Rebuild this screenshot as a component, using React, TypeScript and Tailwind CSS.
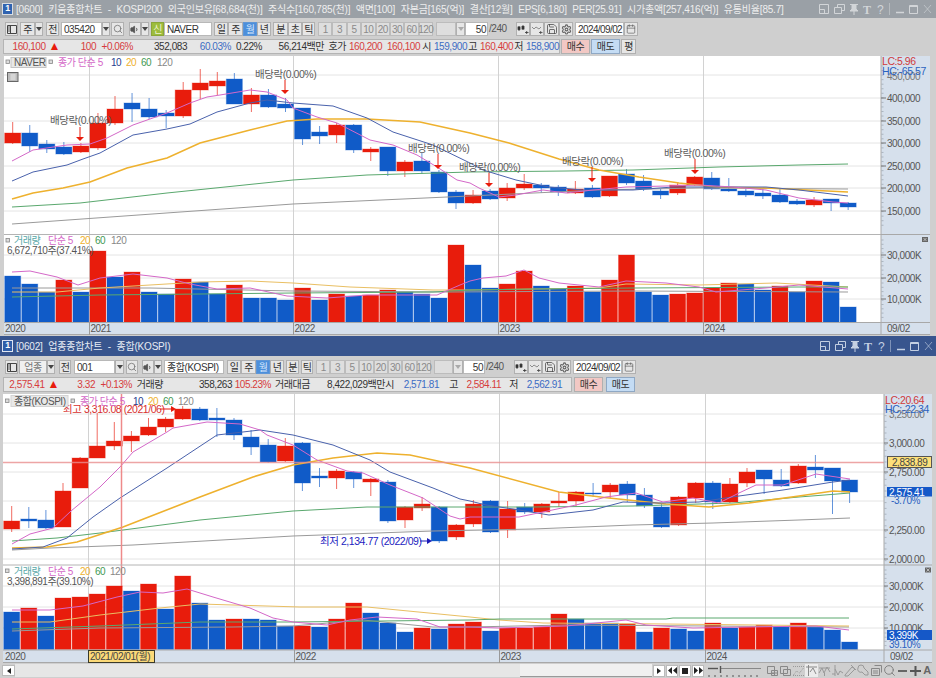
import React from 'react';
import { Search, Volume1, Save, Settings, Calendar } from 'lucide-react';

type Candle = [number, number, number, number, 'r' | 'b'];
type Bar = [number, 'r' | 'b'];

const RED = '#e81c0c';
const BLUE = '#105bc8';
const MA5 = '#d468c8';
const MA10 = '#4a62ac';
const MA20 = '#eeb12e';
const MA60 = '#5aa86e';
const MA120 = '#9a9a9a';

// 상단 차트 (NAVER) 봉 좌표: 몸통 위, 몸통 아래, 꼬리 위, 꼬리 아래
const TOP_CANDLES: Candle[] = [
  [133, 143, 122, 144, 'r'], [133, 146, 125, 152, 'b'], [144, 149, 140, 153, 'b'], [147, 154, 142, 155, 'b'], [146, 152, 143, 153, 'r'],
  [123, 148, 113, 150, 'r'], [109, 123, 96, 125, 'r'], [103, 109, 93, 122, 'b'], [109, 117, 98, 119, 'b'], [113, 116, 110, 128, 'b'],
  [90, 116, 82, 118, 'r'], [83, 90, 69, 99, 'r'], [81, 86, 72, 95, 'r'], [79, 104, 73, 104, 'b'], [95, 104, 88, 112, 'r'],
  [95, 107, 89, 108, 'b'], [104, 108, 98, 112, 'b'], [108, 139, 108, 145, 'b'], [132, 136, 126, 144, 'b'], [125, 135, 123, 143, 'r'],
  [125, 150, 124, 153, 'b'], [149, 152, 147, 161, 'r'], [147, 171, 147, 176, 'b'], [162, 171, 160, 177, 'r'], [161, 171, 153, 174, 'b'],
  [172, 192, 170, 193, 'b'], [192, 203, 190, 209, 'b'], [195, 203, 190, 204, 'r'], [191, 199, 189, 200, 'b'], [188, 198, 183, 201, 'r'],
  [184, 188, 174, 190, 'r'], [185, 188, 183, 193, 'b'], [187, 192, 185, 196, 'b'], [189, 193, 181, 194, 'r'], [188, 197, 185, 198, 'b'],
  [176, 196, 176, 197, 'r'], [174, 183, 169, 185, 'b'], [181, 189, 175, 191, 'b'], [191, 195, 189, 199, 'b'], [185, 193, 183, 195, 'r'],
  [177, 185, 176, 186, 'r'], [178, 189, 172, 190, 'b'], [189, 191, 178, 192, 'b'], [191, 195, 188, 197, 'b'], [193, 196, 189, 199, 'b'],
  [195, 202, 188, 203, 'b'], [201, 204, 199, 205, 'b'], [200, 205, 197, 207, 'r'], [199, 203, 199, 211, 'b'], [203, 207, 202, 210, 'b'],
];

const TOP_VOLUME: Bar[] = [
  [276, 'b'], [284, 'b'], [292, 'b'], [280, 'r'], [292, 'b'], [251, 'r'], [277, 'b'], [272, 'r'], [292, 'b'], [294, 'b'],
  [279, 'r'], [282, 'b'], [294, 'b'], [285, 'r'], [298, 'b'], [298, 'b'], [300, 'b'], [288, 'r'], [300, 'b'], [294, 'r'],
  [296, 'b'], [295, 'r'], [290, 'r'], [292, 'b'], [294, 'b'], [298, 'b'], [245, 'r'], [265, 'b'], [288, 'b'], [284, 'r'],
  [271, 'r'], [286, 'b'], [289, 'b'], [286, 'r'], [292, 'b'], [280, 'r'], [255, 'r'], [292, 'b'], [295, 'b'], [294, 'r'],
  [293, 'r'], [288, 'r'], [283, 'r'], [284, 'b'], [290, 'b'], [286, 'r'], [292, 'b'], [281, 'r'], [282, 'b'], [307, 'b'],
];

// 하단 차트 (KOSPI)
const BOTTOM_CANDLES: Candle[] = [
  [521, 529, 506, 532, 'r'], [519, 521, 507, 528, 'b'], [520, 528, 510, 529, 'b'], [491, 527, 483, 527, 'r'], [458, 488, 457, 488, 'r'],
  [446, 458, 413, 458, 'r'], [441, 446, 422, 450, 'r'], [436, 441, 431, 452, 'r'], [427, 435, 418, 436, 'r'], [419, 427, 417, 432, 'r'],
  [409, 419, 406, 420, 'r'], [409, 420, 407, 421, 'b'], [418, 420, 408, 437, 'b'], [420, 435, 418, 440, 'b'], [437, 447, 430, 455, 'b'],
  [445, 462, 439, 463, 'b'], [446, 461, 438, 462, 'r'], [443, 483, 442, 491, 'b'], [476, 478, 468, 487, 'b'], [471, 478, 469, 489, 'r'],
  [472, 479, 471, 488, 'b'], [479, 482, 478, 496, 'r'], [482, 521, 480, 523, 'b'], [507, 520, 506, 528, 'r'], [504, 508, 497, 511, 'r'],
  [507, 541, 506, 543, 'b'], [525, 537, 524, 540, 'r'], [504, 524, 500, 527, 'r'], [501, 532, 500, 533, 'b'], [509, 530, 501, 538, 'r'],
  [507, 512, 503, 514, 'b'], [504, 512, 503, 518, 'r'], [501, 503, 492, 507, 'r'], [492, 501, 491, 506, 'r'], [493, 494, 483, 497, 'b'],
  [485, 492, 483, 498, 'r'], [484, 495, 481, 502, 'b'], [495, 506, 488, 508, 'b'], [507, 527, 503, 528, 'b'], [497, 525, 496, 526, 'r'],
  [483, 498, 482, 503, 'r'], [483, 502, 481, 509, 'b'], [484, 502, 478, 503, 'r'], [472, 483, 468, 487, 'r'], [470, 479, 470, 494, 'b'],
  [480, 486, 469, 487, 'b'], [466, 483, 464, 484, 'r'], [467, 470, 455, 478, 'b'], [468, 481, 468, 514, 'b'], [480, 492, 480, 503, 'b'],
];

const BOTTOM_VOLUME: Bar[] = [
  [612, 'b'], [608, 'r'], [616, 'b'], [598, 'r'], [597, 'r'], [594, 'r'], [586, 'r'], [591, 'b'], [584, 'r'], [609, 'b'],
  [576, 'r'], [603, 'b'], [620, 'b'], [619, 'r'], [619, 'b'], [620, 'b'], [626, 'b'], [626, 'r'], [627, 'b'], [619, 'r'],
  [603, 'r'], [613, 'b'], [623, 'b'], [632, 'b'], [628, 'r'], [629, 'b'], [624, 'r'], [622, 'r'], [631, 'b'], [628, 'r'],
  [628, 'r'], [627, 'r'], [614, 'r'], [619, 'b'], [623, 'b'], [623, 'b'], [624, 'r'], [632, 'b'], [628, 'r'], [629, 'b'],
  [631, 'b'], [623, 'r'], [628, 'b'], [627, 'r'], [625, 'r'], [627, 'b'], [623, 'r'], [627, 'b'], [630, 'b'], [642, 'b'],
];

const TOP_LINES = [
  { c: MA120, w: 1, p: '12,224 293,204 447,197 599,190 699,188 848,189' },
  { c: MA60, w: 1, p: '12,207 80,203 167,193 293,180 367,175 470,172 566,171 633,170 719,167 799,165 848,164' },
  { c: MA20, w: 1.6, p: '12,199 33,193 63,188 90,182 127,168 167,158 200,143 250,130 287,121 317,119 367,119 420,122 470,133 509,143 559,159 599,170 639,177 679,183 716,187 766,188 848,192' },
  { c: MA10, w: 1, p: '12,181 33,172 67,165 83,159 100,153 133,135 167,129 190,124 217,112 250,103 267,100 293,103 333,106 367,118 393,132 433,145 470,163 483,170 516,180 549,187 583,190 633,190 673,187 716,187 766,187 799,190 848,196' },
  { c: MA5, w: 1, p: '12,161 33,150 67,145 90,144 107,138 133,125 167,113 190,103 207,97 220,95 250,90 267,92 287,100 293,108 317,117 337,123 370,140 393,145 417,155 437,167 457,180 470,183 479,188 499,197 516,195 543,190 566,193 593,190 626,187 666,186 699,185 733,187 766,190 799,198 833,202 848,203' },
];

const TOP_VOL_LINES = [
  { c: MA120, w: 1, p: '12,288 83,288 150,288 293,291 447,292 633,291 848,292' },
  { c: '#e9bf63', w: 1, p: '12,292 57,292 100,288 150,285 200,282 250,281 293,283 350,287 433,290 470,290 599,288 626,284 699,285 776,283 848,287' },
  { c: MA60, w: 1, p: '12,297 100,295 200,294 293,293 433,292 470,290 533,289 633,288 799,287 848,287' },
  { c: MA5, w: 1, p: '12,272 30,271 57,277 78,285 100,278 133,274 167,278 190,284 217,289 250,288 287,296 327,298 367,295 437,295 460,285 470,281 483,278 506,276 524,270 539,278 559,283 599,287 626,281 666,283 699,287 716,292 766,288 799,285 848,289' },
];

const BOTTOM_LINES = [
  { c: MA120, w: 1, p: '12,550 50,548 133,545 293,536 433,531 533,529 633,525 713,523 799,520 850,518' },
  { c: MA60, w: 1, p: '12,541 57,538 100,533 200,520 293,511 367,507 470,507 533,507 633,506 733,503 799,497 850,493' },
  { c: MA20, w: 1.6, p: '12,548 47,547 77,542 123,527 200,497 253,477 293,465 333,458 377,453 410,455 470,468 559,492 609,498 666,504 709,507 749,503 799,496 833,491 850,492' },
  { c: MA10, w: 1, p: '12,549 43,547 67,538 93,517 120,498 167,468 217,435 260,430 293,435 333,445 370,460 390,472 433,488 460,499 470,501 486,505 513,509 549,515 593,510 623,502 659,503 699,502 739,496 783,490 833,482 850,480' },
  { c: MA5, w: 1, p: '12,544 30,534 53,528 71,511 100,487 120,467 133,452 167,432 173,428 207,422 240,424 260,430 267,435 293,445 317,460 347,471 363,473 390,485 423,498 450,516 460,519 470,517 519,517 543,512 576,505 606,497 636,493 663,502 693,498 719,503 739,493 756,485 783,485 816,474 850,479' },
];

const BOTTOM_VOL_LINES = [
  { c: MA120, w: 1, p: '12,631 100,628 233,627 293,626 363,620 433,627 470,627 566,625 849,627' },
  { c: '#e9bf63', w: 1, p: '12,622 50,622 100,615 160,608 200,604 300,607 367,607 470,617 499,620 543,623 666,624 849,626' },
  { c: MA60, w: 1, p: '12,629 100,626 200,622 293,622 470,620 499,619 666,619 673,618 849,618' },
  { c: MA5, w: 1, p: '12,610 50,610 83,606 117,597 140,592 163,593 187,589 213,597 250,608 273,618 293,622 327,625 350,620 377,617 417,619 440,627 470,627 499,628 566,626 626,620 646,625 693,628 749,627 816,626 849,630' },
];

function Candles({ data, x0, dx }: { data: Candle[]; x0: number; dx: number }) {
  return (
    <>
      {data.map(([t, b, wt, wb, col], i) => {
        const x = x0 + dx * i;
        const c = col === 'r' ? RED : BLUE;
        return (
          <g key={i}>
            <line x1={x} x2={x} y1={wt} y2={wb} stroke={c} strokeOpacity={0.65} />
            <rect x={x - 8} y={t} width={16} height={Math.max(b - t, 1)} fill={c} stroke={c} strokeOpacity={0.35} />
          </g>
        );
      })}
    </>
  );
}

function Bars({ data, x0, dx, base }: { data: Bar[]; x0: number; dx: number; base: number }) {
  return (
    <>
      {data.map(([t, col], i) => (
        <rect
          key={i}
          x={x0 + dx * i - 8}
          y={t}
          width={16}
          height={base - t}
          fill={col === 'r' ? RED : BLUE}
          stroke={col === 'r' ? RED : BLUE}
          strokeOpacity={0.3}
        />
      ))}
    </>
  );
}

function Lines({ lines }: { lines: { c: string; w: number; p: string }[] }) {
  return (
    <>
      {lines.map((l, i) => (
        <polyline key={i} points={l.p} fill="none" stroke={l.c} strokeWidth={l.w} />
      ))}
    </>
  );
}

function T({ x, y, fill = '#555', size = 10, children }: { x: number; y: number; fill?: string; size?: number; children: React.ReactNode }) {
  return (
    <text x={x} y={y} fill={fill} fontSize={size} letterSpacing={-0.45}>
      {children}
    </text>
  );
}

function Marker({ x, y }: { x: number; y: number }) {
  return <rect x={x} y={y} width={3.5} height={3.5} fill="#ddd" stroke="#888" strokeWidth={0.8} />;
}

function Dividend({ x, y }: { x: number; y: number }) {
  return (
    <T x={x} y={y} size={10.5} fill="#5c5c5c">
      배당락(0.00%)
    </T>
  );
}

function DivArrow({ x, a, b }: { x: number; a: number; b: number }) {
  return (
    <g>
      <line x1={x} x2={x} y1={a} y2={b} stroke="#e81c0c" />
      <polygon points={`${x - 4},${b} ${x + 4},${b} ${x},${b + 4}`} fill="#e81c0c" />
    </g>
  );
}

function AxisTicks({ x, y1, y2, step }: { x: number; y1: number; y2: number; step: number }) {
  const ys: number[] = [];
  for (let y = y1; y < y2; y += step) ys.push(y);
  return (
    <>
      {ys.map((y) => (
        <line key={y} x1={x} x2={x + 2} y1={y} y2={y} stroke="#8f98a3" strokeWidth={0.6} />
      ))}
    </>
  );
}

function CloseBox({ x, y }: { x: number; y: number }) {
  return (
    <g>
      <rect x={x} y={y} width={6} height={5} fill="#666" />
      <path d={`M${x + 1.5} ${y + 1}l3 3m0-3l-3 3`} stroke="#ddd" strokeWidth={0.7} />
    </g>
  );
}

function TopChart() {
  const grid = [75, 98, 121, 143, 166, 188, 211];
  const vgrid = [89.5, 293.5, 498.5, 703.5];
  return (
    <svg viewBox="4 56 926 279" className="block h-[279px] w-[926px] shrink-0">
      <rect x={4} y={56} width={926} height={279} fill="#fff" />
      {grid.map((y) => <line key={y} x1={4} x2={881} y1={y} y2={y} stroke="#e4e4e4" />)}
      {[255, 278, 299].map((y) => <line key={y} x1={4} x2={881} y1={y} y2={y} stroke="#e4e4e4" />)}
      {vgrid.map((x) => <line key={x} x1={x} x2={x} y1={56} y2={322} stroke="#d2d2d2" />)}
      <Candles data={TOP_CANDLES} x0={12.7} dx={17.05} />
      <Lines lines={TOP_LINES} />
      <DivArrow x={80} a={127} b={137} />
      <DivArrow x={285} a={80} b={90} />
      <DivArrow x={438} a={154} b={165} />
      <DivArrow x={489} a={173} b={183} />
      <DivArrow x={592} a={167} b={178} />
      <DivArrow x={695} a={159} b={170} />
      <Dividend x={50} y={124} />
      <Dividend x={255} y={78} />
      <Dividend x={408} y={152} />
      <Dividend x={459} y={171} />
      <Dividend x={562} y={165} />
      <Dividend x={664} y={157} />

      <Bars data={TOP_VOLUME} x0={12.7} dx={17.05} base={322} />
      <Lines lines={TOP_VOL_LINES} />

      <line x1={4} x2={881} y1={234.5} y2={234.5} stroke="#b4b4b4" />
      <rect x={881} y={56} width={49} height={279} fill="#d6e0ec" />
      <line x1={881} x2={881} y1={56} y2={335} stroke="#a8a8a8" />
      <line x1={881} x2={930} y1={234.5} y2={234.5} stroke="#a8a8a8" />
      <AxisTicks x={881.5} y1={66} y2={228} step={4.55} />
      <AxisTicks x={881.5} y1={240} y2={320} step={4.3} />
      {[[98, '400,000'], [121, '350,000'], [143, '300,000'], [166, '250,000'], [188, '200,000'], [211, '150,000'], [255, '30,000K'], [278, '20,000K'], [299, '10,000K']].map(([y, s]) => (
        <g key={s as string}>
          <line x1={881} x2={886} y1={y as number} y2={y as number} stroke="#777" />
          <T x={887} y={(y as number) + 3.5}>{s}</T>
        </g>
      ))}
      <T x={887} y={80} fill="#777">450,000</T>
      <T x={882} y={65} fill="#d03a3a" size={10.5}>LC:5.96</T>
      <T x={882} y={75} fill="#2a62c0" size={10.5}>HC:-65.57</T>
      <CloseBox x={922} y={237} />

      <rect x={4} y={322} width={926} height={13} fill="#d6e0ec" />
      <line x1={4} x2={930} y1={322.5} y2={322.5} stroke="#a8a8a8" />
      <line x1={4} x2={930} y1={334.5} y2={334.5} stroke="#a8a8a8" />
      {[[89.5, '2021'], [293.5, '2022'], [498.5, '2023'], [703.5, '2024']].map(([x, s]) => (
        <g key={s as string}>
          <line x1={x as number} x2={x as number} y1={322} y2={335} stroke="#999" />
          <T x={(x as number) + 1} y={332}>{s}</T>
        </g>
      ))}
      <T x={5} y={332}>2020</T>
      <line x1={881} x2={881} y1={322} y2={335} stroke="#a8a8a8" />
      <T x={887} y={332}>09/02</T>

      <Marker x={6} y={60} />
      <rect x={11} y={57.5} width={35} height={10} fill="#e8e8e8" stroke="#c4c4c4" />
      <T x={14} y={66} fill="#555">NAVER</T>
      <Marker x={49} y={60} />
      <T x={58} y={66} fill={MA5}>종가 단순 5</T>
      <T x={111} y={66} fill="#27408f">10</T>
      <T x={126} y={66} fill={MA20}>20</T>
      <T x={141} y={66} fill="#3f9a55">60</T>
      <T x={157} y={66} fill="#888">120</T>
      <rect x={7.5} y={72.5} width={10.5} height={9} fill="#bbb" stroke="#666" />
      <path d="M10 75h6M10 77h6M10 79h6M12 74v6M14 74v6" stroke="#eee" strokeWidth={0.6} />

      <Marker x={6} y={238.5} />
      <T x={14} y={244} fill="#59a8a8">거래량</T>
      <T x={48} y={244} fill={MA5}>단순 5</T>
      <T x={80} y={244} fill={MA20}>20</T>
      <T x={95} y={244} fill="#3f9a55">60</T>
      <T x={111} y={244} fill="#888">120</T>
      <T x={7} y={254}>6,672,710주(37.41%)</T>
    </svg>
  );
}

function BottomChart() {
  const grid = [414, 443, 472, 501, 530, 559];
  const vgrid = [88.5, 294.5, 499.5, 705.5];
  return (
    <svg viewBox="3 394 929 269" className="block h-[269px] w-[929px] shrink-0">
      <rect x={3} y={394} width={929} height={269} fill="#fff" />
      {grid.map((y) => <line key={y} x1={3} x2={884} y1={y} y2={y} stroke="#e4e4e4" />)}
      {[586, 607, 628].map((y) => <line key={y} x1={3} x2={884} y1={y} y2={y} stroke="#e4e4e4" />)}
      {vgrid.map((x) => <line key={x} x1={x} x2={x} y1={394} y2={650} stroke="#d2d2d2" />)}
      <Candles data={BOTTOM_CANDLES} x0={11.7} dx={17.1} />
      <Lines lines={BOTTOM_LINES} />
      <line x1={3} x2={884} y1={462.5} y2={462.5} stroke="#e88f8f" strokeWidth={1.6} strokeOpacity={0.8} />
      <line x1={121.5} x2={121.5} y1={394} y2={587} stroke="#ee8a8a" strokeWidth={1.5} />

      <T x={63} y={412.5} fill="#d83030" size={10.5}>최고 3,316.08 (2021/06)</T>
      <path d="M160 409h13" stroke="#e81c0c" />
      <polygon points="171,406 176,409 171,412" fill="#e81c0c" />
      <T x={320} y={545} fill="#2222c0" size={10.5}>최저 2,134.77 (2022/09)</T>
      <path d="M420 541h9" stroke="#1a1ab8" />
      <polygon points="427,538 432,541 427,544" fill="#1a1ab8" />

      <Bars data={BOTTOM_VOLUME} x0={11.7} dx={17.1} base={649.5} />
      <Lines lines={BOTTOM_VOL_LINES} />

      <line x1={3} x2={884} y1={565} y2={565} stroke="#b4b4b4" />
      <rect x={884} y={394} width={48} height={269} fill="#d6e0ec" />
      <line x1={884} x2={884} y1={394} y2={663} stroke="#a8a8a8" />
      <line x1={884} x2={932} y1={565} y2={565} stroke="#a8a8a8" />
      <AxisTicks x={884.5} y1={404} y2={562} step={5.8} />
      <AxisTicks x={884.5} y1={570} y2={648} step={4.2} />
      {[[443, '3,000.00'], [472, '2,750.00'], [530, '2,250.00'], [559, '2,000.00'], [586, '30,000K'], [607, '20,000K'], [628, '10,000K']].map(([y, s]) => (
        <g key={s as string}>
          <line x1={884} x2={888} y1={y as number} y2={y as number} stroke="#777" />
          <T x={889} y={(y as number) + 3.5}>{s}</T>
        </g>
      ))}
      <T x={889} y={418} fill="#777">3,250.00</T>
      <T x={885} y={403.5} fill="#d03a3a" size={10.5}>LC:20.64</T>
      <T x={885} y={413} fill="#2a62c0" size={10.5}>HC:-22.34</T>
      <rect x={887.5} y={456.5} width={44} height={11} fill="#fde07a" stroke="#555" />
      <T x={892} y={465.5} fill="#444">2,838.89</T>
      <rect x={887} y={487} width={45} height={9.5} fill="#1558c8" />
      <T x={889} y={495.5} fill="#fff">2,575.41</T>
      <T x={891} y={504} fill="#2a62c0">-3.70%</T>
      <CloseBox x={925} y={567.5} />
      <rect x={887} y={630} width={45} height={10} fill="#1558c8" />
      <T x={889} y={638.5} fill="#fff">3,399K</T>
      <T x={889} y={648} fill="#2a62c0">39.10%</T>

      <rect x={3} y={650} width={929} height={13} fill="#d6e0ec" />
      <line x1={3} x2={932} y1={650} y2={650} stroke="#a8a8a8" />
      <line x1={3} x2={932} y1={662.5} y2={662.5} stroke="#a8a8a8" />
      {[[294.5, '2022'], [499.5, '2023'], [705.5, '2024']].map(([x, s]) => (
        <g key={s as string}>
          <line x1={x as number} x2={x as number} y1={650} y2={663} stroke="#999" />
          <T x={(x as number) + 1} y={660}>{s}</T>
        </g>
      ))}
      <T x={5} y={660}>2020</T>
      <rect x={88.5} y={650.5} width={66} height={12} fill="#fbd978" stroke="#3a3a2a" />
      <T x={90} y={660} fill="#444">2021/02/01(월)</T>
      <line x1={884} x2={884} y1={650} y2={663} stroke="#a8a8a8" />
      <T x={890} y={660}>09/02</T>

      <Marker x={5.5} y={399} />
      <rect x={11} y={395.5} width={57} height={11} fill="#e8e8e8" stroke="#d4d4d4" />
      <T x={14} y={404.5}>종합(KOSPI)</T>
      <Marker x={71} y={399} />
      <T x={80} y={404.5} fill={MA5}>종가 단순 5</T>
      <T x={133} y={404.5} fill="#27408f">10</T>
      <T x={148} y={404.5} fill={MA20}>20</T>
      <T x={163} y={404.5} fill="#3f9a55">60</T>
      <T x={178} y={404.5} fill="#888">120</T>

      <Marker x={5.5} y={569} />
      <T x={14} y={575} fill="#59a8a8">거래량</T>
      <T x={48} y={575} fill={MA5}>단순 5</T>
      <T x={80} y={575} fill={MA20}>20</T>
      <T x={95} y={575} fill="#3f9a55">60</T>
      <T x={110} y={575} fill="#888">120</T>
      <T x={7} y={585}>3,398,891주(39.10%)</T>
    </svg>
  );
}

function WinControls({ color }: { color: string }) {
  return (
    <svg width="116" height="14" viewBox="0 0 116 14" fill="none" stroke={color} strokeWidth="1" className="shrink-0">
      <path d="M2.500 2.500h9v9h-9zM2.500 7.500h5v4" />
      <path d="M17.500 5.500h7v6h-7zM20.500 5.500v-3h7v6h-3" />
      <path d="M33 2.500h8M35 3v4l-2 2h8l-2-2V3M37 9v4" fill={color} />
      <text x="46" y="12" fontSize="12" fontWeight="700" fill={color} stroke="none" fontFamily="Liberation Serif, serif">T</text>
      <text x="60" y="12" fontSize="12" fill={color} stroke="none">?</text>
      <path d="M72.500 1v12" strokeOpacity="0.5" />
      <path d="M79 10.500h8" strokeWidth="1.500" />
      <path d="M92.500 3.500h8v8h-8zM92.500 4.500h8" />
      <path d="M107 3l7 8m0-8l-7 8" strokeOpacity="0.6" />
    </svg>
  );
}

function WinNo({ dark }: { dark?: boolean }) {
  return (
    <span
      className={
        dark
          ? 'flex h-[12px] w-[11px] shrink-0 items-center justify-center border border-[#dfe6f2] bg-[#2f5ea8] text-[9px] font-bold text-white'
          : 'flex h-[12px] w-[11px] shrink-0 items-center justify-center border border-[#d9dde2] bg-[#2f63b0] text-[9px] font-bold text-white'
      }
    >
      1
    </span>
  );
}

const btnBase = 'flex shrink-0 items-center justify-center border text-[10px]';
const btn = `${btnBase} h-[14px] border-[#b0b0b0] bg-[#e6e6e6] text-[#333]`;
const btnActive = `${btnBase} h-[14px] border-[#5f96d6] bg-[#4c8fdb] text-[#d7e8fb]`;
const btnBuy = `${btnBase} h-[15px] w-[29px] border-[#b0b0b0] bg-[#f2c8c4] text-[#333]`;
const btnSell = `${btnBase} h-[15px] w-[29px] border-[#8fa8c4] bg-[#c4dcf4] text-[#333]`;
const numBtn = `${btnBase} h-[14px] border-[#bcbcbc] bg-[#dedede] text-[#8a8a8a]`;
const field = 'flex h-[14px] shrink-0 items-center border border-[#b8b8b8] bg-white pl-[2px] text-[10px] text-[#333]';
const playBtn = 'flex h-[12px] w-[12px] items-center justify-center border border-[#bbb] bg-white';

function PanelIcon() {
  return (
    <span className={`${btn} w-[13px]`}>
      <svg width="10" height="10" viewBox="0 0 10 10" fill="none" stroke="#444">
        <path d="M.5 1.500h9v8h-9zM3.500 1.500v8" />
        <path d="M1 3h2M1 5h2M1 7h2" strokeWidth="0.8" />
      </svg>
    </span>
  );
}

function Arrow({ w = 8, light }: { w?: number; light?: boolean }) {
  return (
    <span className={`${btn} shrink-0`} style={{ width: w }}>
      <span className={light ? 'border-x-[3px] border-t-[4px] border-x-transparent border-t-[#aaa]' : 'border-x-[3px] border-t-[4px] border-x-transparent border-t-[#444]'} />
    </span>
  );
}

function Periods() {
  return (
    <div className="ml-[3px] flex w-[115px]">
      {['1', '3', '5', '10', '20', '30', '60', '120'].map((s) => (
        <span key={s} className={`${numBtn} w-[14px] flex-1 tracking-[-0.5px]`}>{s}</span>
      ))}
    </div>
  );
}

function ChartTools() {
  return (
    <div className="flex">
      <span className={`${btn} w-[14px]`}>
        <svg width="12" height="11" viewBox="0 0 12 11" fill="#333" stroke="#333" strokeWidth="0.8">
          <path d="M2 2v5M6 1v5" /><rect x="1" y="3" width="2" height="2.500" /><rect x="5" y="2.500" width="2" height="2.500" />
          <path d="M8 8.500h3.500M9.700 7v3" />
        </svg>
      </span>
      <span className={`${btn} w-[14px]`}>
        <svg width="12" height="11" viewBox="0 0 12 11" fill="none" stroke="#777" strokeWidth="0.8">
          <path d="M1 3l2 2 2-2 3 2 2-2" /><path d="M8 8.500h3.500M9.700 7v3" stroke="#444" />
        </svg>
      </span>
      <span className={`${btn} w-[15px]`}><Save size={12} strokeWidth={1.5} color="#444" /></span>
      <span className={`${btn} w-[14px]`}><Settings size={11} strokeWidth={2.4} color="#666" /></span>
    </div>
  );
}

function BottomTools() {
  const glyph = 'h-[13px] w-[13px] shrink-0';
  return (
    <div className="ml-[3px] flex items-center">
      <svg className={glyph} viewBox="0 0 13 13" fill="none" stroke="#888"><path d="M1.500 2.500h7v7h-7zM5.500 6.500h6v5h-6zM8.500 7v4M6 9h5" /></svg>
      <svg className={glyph} viewBox="0 0 13 13" fill="none" stroke="#888"><path d="M1.500 2.500h7v7h-7zM4.500 5.500h7v6h-7z" /></svg>
      <svg className={glyph} viewBox="0 0 13 13" fill="none" stroke="#999" strokeDasharray="1 1"><path d="M1 2.500h11M1 11.500h11M1.500 11l3-4 3 2 4-5" /></svg>
      <svg className={`${glyph} bg-[#ececec]`} viewBox="0 0 13 13" fill="none" stroke="#888"><path d="M3.500 1v11M1 3h11M5 8l3-4 3 6" /></svg>
      <svg className={glyph} viewBox="0 0 13 13" fill="none" stroke="#999"><path d="M1 4h11M1 9l3-5 2 5 3-6 3 5M6.500 9v3" /></svg>
      <svg className={glyph} viewBox="0 0 13 13" fill="none" stroke="#999"><path d="M4 1v11M1 10h3M4 5l3 6 2-4 3 2" /></svg>
      <svg className={glyph} viewBox="0 0 13 13" fill="none" stroke="#999"><path d="M1 11L8 3l3 2-7 7H1zM7 1l5 5" /></svg>
      <svg className={glyph} viewBox="0 0 13 13" fill="none" stroke="#999"><path d="M1 4a3 3 0 1 1 6 0l4 4v3H8L5 8a3 3 0 0 1-4-4z" /></svg>
      <svg className={glyph} viewBox="0 0 13 13" fill="none" stroke="#888"><path d="M1.500 4.500h8v7h-8zM4.500 1.500h7v7M3 7h5M3 9h5" /></svg>
      <Search size={13} strokeWidth={1.6} color="#777" className="shrink-0" />
      <svg className={glyph} viewBox="0 0 13 13" stroke="#666" strokeWidth="2"><path d="M2 7h9" /></svg>
      <svg className={glyph} viewBox="0 0 13 13" stroke="#555" strokeWidth="2"><path d="M1 7h11M6.500 2v10" /></svg>
      <span className="w-[10px] shrink-0 text-center text-[11px] font-bold leading-none text-[#666]">A</span>
    </div>
  );
}

function Cell({ w, c = '#333', children }: { w: number; c?: string; children: React.ReactNode }) {
  return (
    <span style={{ width: w, color: c }} className="shrink-0 whitespace-nowrap text-right">
      {children}
    </span>
  );
}

function Up() {
  return <span className="ml-[3px] text-[12px] leading-none text-[#e81c0c]">▲</span>;
}

export default function App() {
  const tsRed = '#d63c3c';
  const tsBlue = '#3c6cc4';
  return (
    <div className="h-[678px] w-[936px] overflow-hidden bg-[#cfcfcf] font-['Liberation_Sans','Noto_Sans_CJK_KR',sans-serif] text-[10px] tracking-[-0.45px] text-[#333]">
      {/* 상단 창: 키움종합차트 */}
      <div className="flex h-[336px] flex-col">
        <div className="flex h-[18px] items-center bg-[#9aa0a6] pl-[2px] pr-[3px] text-[#eeeeee]">
          <WinNo />
          <span className="ml-[3px] flex-1 truncate text-[10px] tracking-[-0.2px] [word-spacing:3px]">
            [0600] 키움종합차트 - KOSPI200 외국인보유[68,684(천)] 주식수[160,785(천)] 액면[100] 자본금[165(억)] 결산[12월] EPS[6,180] PER[25.91] 시가총액[257,416(억)] 유통비율[85.7]
          </span>
          <WinControls color="#d2d5d8" />
        </div>
        <div className="flex h-[20px] items-end pb-[2px] pl-[5px]">
          <PanelIcon />
          <span className={`${btn} ml-[2px] w-[15px]`}>주</span>
          <Arrow />
          <span className={`${btn} ml-[3px] w-[13px]`}>전</span>
          <span className={`${field} ml-[2px] w-[41px]`}>035420</span>
          <Arrow />
          <span className={`${btn} ml-[1px] w-[13px]`}><Search size={10} strokeWidth={2} color="#777" /></span>
          <span className={`${btn} ml-[5px] w-[12px]`}><Volume1 size={11} fill="#555" color="#555" /></span>
          <Arrow />
          <span className={`${btnBase} ml-[2px] h-[14px] w-[13px] border-[#8ba63a] bg-[#9dbc3c] text-[#eef3d0]`}>신</span>
          <span className={`${field} w-[48px]`}>NAVER</span>
          <span className={`${btn} ml-[2px] w-[14px]`}>일</span>
          <span className={`${btn} w-[15px]`}>주</span>
          <span className={`${btnActive} w-[14px]`}>월</span>
          <span className={`${btn} w-[14px]`}>년</span>
          <span className={`${btn} ml-[2px] w-[15px]`}>분</span>
          <span className={`${btn} w-[14px]`}>초</span>
          <span className={`${btn} w-[13px]`}>틱</span>
          <Periods />
          <span className={`${numBtn} ml-[3px] w-[20px]`} />
          <Arrow w={9} light />
          <span className={`${field} w-[23px] justify-end pr-[1px]`}>50</span>
          <span className="w-[28px] pl-[1px] leading-[14px] text-[#555]">/240</span>
          <ChartTools />
          <span className={`${field} ml-[2px] w-[49px] tracking-[-0.6px]`}>2024/09/02</span>
          <span className={`${btn} w-[14px]`}><Calendar size={10} strokeWidth={1.5} color="#555" /></span>
        </div>
        <div className="flex h-[18px] items-start pl-[3px] pt-[1px]">
          <div className="flex h-[15px] w-[557px] items-center border border-[#b4b4b4] bg-[#e6e6e6]">
            <Cell w={56} c={tsRed}>160,100<Up /></Cell>
            <Cell w={36} c={tsRed}>100</Cell>
            <Cell w={37} c={tsRed}>+0.06%</Cell>
            <Cell w={54}>352,083</Cell>
            <Cell w={44} c={tsBlue}>60.03%</Cell>
            <Cell w={31}>0.22%</Cell>
            <Cell w={62}>56,214백만</Cell>
            <Cell w={22}>호가</Cell>
            <Cell w={36} c={tsRed}>160,200</Cell>
            <Cell w={38} c={tsRed}>160,100</Cell>
            <Cell w={11}>시</Cell>
            <Cell w={36} c={tsBlue}>159,900</Cell>
            <Cell w={10}>고</Cell>
            <Cell w={36} c={tsRed}>160,400</Cell>
            <Cell w={10}>저</Cell>
            <Cell w={36} c={tsBlue}>158,900</Cell>
          </div>
          <span className={`${btnBuy} ml-[1px]`}>매수</span>
          <span className={`${btnSell} ml-[1px]`}>매도</span>
          <span className={`${btnBase} ml-[1px] h-[15px] w-[15px] border-[#b0b0b0] bg-[#e6e6e6] text-[#333]`}>평</span>
        </div>
        <div className="flex pl-[4px]">
          <TopChart />
        </div>
      </div>

      {/* 하단 창: 업종종합차트 */}
      <div className="flex h-[342px] flex-col">
        <div className="flex h-[20px] items-center bg-[#38558e] pl-[2px] pr-[2px] text-[#e6ebf4]">
          <WinNo dark />
          <span className="ml-[3px] flex-1 truncate text-[10px] tracking-[-0.2px] [word-spacing:3px]">[0602] 업종종합차트 - 종합(KOSPI)</span>
          <WinControls color="#c3cfe2" />
        </div>
        <div className="flex h-[19px] items-end pb-[1px] pl-[5px]">
          <PanelIcon />
          <span className={`${btnBase} ml-[1px] h-[14px] w-[28px] border-[#b0b0b0] bg-[#f0f0f0] text-[#777]`}>업종</span>
          <Arrow />
          <span className={`${btn} ml-[4px] w-[12px]`}>전</span>
          <span className={`${field} ml-[3px] w-[41px]`}>001</span>
          <Arrow w={9} />
          <span className={`${btn} ml-[2px] w-[12px]`}><Search size={10} strokeWidth={2} color="#777" /></span>
          <span className={`${btn} ml-[4px] w-[12px]`}><Volume1 size={11} fill="#555" color="#555" /></span>
          <Arrow />
          <span className={`${field} ml-[2px] w-[60px]`}>종합(KOSPI)</span>
          <span className={`${btn} ml-[3px] w-[14px]`}>일</span>
          <span className={`${btn} w-[15px]`}>주</span>
          <span className={`${btnActive} w-[14px]`}>월</span>
          <span className={`${btn} w-[14px]`}>년</span>
          <span className={`${btn} ml-[2px] w-[13px]`}>분</span>
          <span className={`${btn} ml-[2px] w-[12px]`}>틱</span>
          <Periods />
          <span className={`${numBtn} ml-[3px] w-[19px]`} />
          <Arrow w={10} light />
          <span className={`${field} w-[22px] justify-end pr-[1px]`}>50</span>
          <span className="w-[29px] pl-[1px] leading-[14px] text-[#555]">/240</span>
          <ChartTools />
          <span className={`${field} ml-[2px] w-[49px] tracking-[-0.6px]`}>2024/09/02</span>
          <span className={`${btn} w-[14px]`}><Calendar size={10} strokeWidth={1.5} color="#555" /></span>
        </div>
        <div className="flex h-[19px] items-start pl-[3px] pt-[2px]">
          <div className="flex h-[15px] w-[569px] items-center border border-[#b4b4b4] bg-[#e6e6e6]">
            <Cell w={55} c={tsRed}>2,575.41<Up /></Cell>
            <Cell w={36} c={tsRed}>3.32</Cell>
            <Cell w={37} c={tsRed}>+0.13%</Cell>
            <Cell w={31}>거래량</Cell>
            <Cell w={69}>358,263</Cell>
            <Cell w={39} c={tsRed}>105.23%</Cell>
            <Cell w={39}>거래대금</Cell>
            <Cell w={75}>8,422,029백만</Cell>
            <Cell w={9}>시</Cell>
            <Cell w={45} c={tsBlue}>2,571.81</Cell>
            <Cell w={19}>고</Cell>
            <Cell w={43} c={tsRed}>2,584.11</Cell>
            <Cell w={17}>저</Cell>
            <Cell w={44} c={tsBlue}>2,562.91</Cell>
          </div>
          <span className={`${btnBuy} ml-[2px]`}>매수</span>
          <span className={`${btnSell} ml-[3px]`}>매도</span>
        </div>
        <div className="flex pl-[3px]">
          <BottomChart />
        </div>
        {/* 스크롤 + 재생 도구 */}
        <div className="flex h-[15px] items-center pl-[2px]">
          <span className="flex h-[11px] w-[13px] shrink-0 items-center justify-center border border-[#bbb] bg-white">
            <span className="border-y-[3px] border-r-[4px] border-y-transparent border-r-[#222]" />
          </span>
          <div className="h-[13px] w-[505px] shrink-0 bg-[#e6e6e6]" />
          <div className="h-[13px] w-[132px] shrink-0 border-b border-[#999] bg-[#f0f0f0]" />
          <div className="ml-[1px] flex gap-[1px]">
            <span className={playBtn}>
              <span className="border-y-[3px] border-l-[4px] border-y-transparent border-l-[#222]" />
            </span>
            <span className={playBtn}>
              <svg width="9" height="7" viewBox="0 0 9 7" fill="#222"><path d="M4 0v7L0 3.500zM9 0v7L5 3.500z" /></svg>
            </span>
            <span className={playBtn}>
              <span className="h-[6px] w-[6px] bg-[#222]" />
            </span>
            <span className={playBtn}>
              <svg width="9" height="7" viewBox="0 0 9 7" fill="#222"><path d="M0 0v7l4-3.500zM5 0v7l4-3.500z" /></svg>
            </span>
          </div>
          <svg width="56" height="13" viewBox="0 0 56 13" className="ml-[3px] shrink-0" fill="none" stroke="#555">
            <path d="M1 4.500h10" strokeWidth="1.400" />
            <path d="M13 4.500h41" stroke="#888" />
            <path d="M13.500 2v7" strokeWidth="1.400" />
            <path d="M2 11v2M8 11v2M14 11v2M20 11v2M26 11v2M32 11v2M38 11v2M44 11v2M50 11v2" strokeWidth="1" />
          </svg>
          <BottomTools />
        </div>
      </div>
    </div>
  );
}
